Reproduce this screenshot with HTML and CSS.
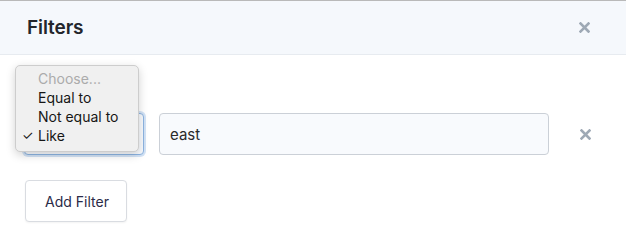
FILE: index.html
```html
<!DOCTYPE html>
<html>
<head>
<meta charset="utf-8">
<link rel="stylesheet" href="styles.css">
</head>
<body>
<div class="modal">
  <div class="header">
    <h2 class="title">Filters</h2>
    <button class="close" aria-label="Close">
      <svg width="11" height="11" viewBox="0 0 11 11"><path d="M1.5 1.5 L9.5 9.5 M9.5 1.5 L1.5 9.5" stroke="#9ea9b5" stroke-width="2.6" stroke-linecap="square"/></svg>
    </button>
  </div>
  <div class="content">
    <div class="filter-row">
      <div class="select">
        <div class="menu">
          <div class="opt placeholder">Choose...</div>
          <div class="opt">Equal to</div>
          <div class="opt">Not equal to</div>
          <div class="opt selected"><span class="check">✓</span>Like</div>
        </div>
      </div>
      <div class="input">east</div>
      <button class="close row-close" aria-label="Remove">
        <svg width="11" height="11" viewBox="0 0 11 11"><path d="M1.5 1.5 L9.5 9.5 M9.5 1.5 L1.5 9.5" stroke="#9ea9b5" stroke-width="2.6" stroke-linecap="square"/></svg>
      </button>
    </div>
    <button class="add-btn">Add Filter</button>
  </div>
</div>
</body>
</html>
```
FILE: styles.css
```css
* { box-sizing: border-box; }
html, body { margin: 0; padding: 0; background: #fff; }
body { font-family: Inter, "Noto Sans", sans-serif; color: #222; width: 626px; height: 250px; overflow: hidden; }
.modal { border-top: 1px solid #b9b9b9; }
.header {
  height: 54px;
  background: #f5f8fc;
  border-bottom: 1px solid #e7ebf0;
  display: flex;
  align-items: center;
  justify-content: space-between;
  padding: 0 36px 0 27px;
}
.title { margin: 0; font-size: 19px; font-weight: 600; color: #23262c; letter-spacing: -0.1px; }
.close { border: 0; background: none; padding: 0; width: 11px; height: 11px; display: flex; cursor: pointer; }
.content { padding: 58px 0 0 24px; }
.filter-row { display: flex; align-items: center; }
.select {
  position: relative;
  width: 120px;
  height: 42px;
  border: 1px solid #8db4e2;
  border-radius: 4px;
  box-shadow: 0 0 0 2px rgba(130,175,230,0.35);
  background: #f8fafd;
  margin-top: -1px;
}
.menu {
  position: absolute;
  left: -10px;
  top: -49px;
  width: 124px;
  background: #f0f0f0;
  border: 1px solid #cdcdcd;
  border-radius: 5px;
  box-shadow: 0 3px 10px rgba(0,0,0,0.18);
  padding: 3px 0 6px;
  font-size: 14px;
  line-height: 19px;
  color: #161616;
}
.opt { padding-left: 22px; position: relative; }
.placeholder { color: #ababab; }
.check { position: absolute; left: 6px; top: 0; font-size: 13px; }
.input {
  margin-left: 15px;
  width: 390px;
  height: 42px;
  border: 1px solid #cbd0d7;
  border-radius: 4px;
  background: #f8fafd;
  padding-left: 10px;
  display: flex;
  align-items: center;
  font-size: 15px;
  color: #2a2a2a;
}
.row-close { margin-left: 31px; }
.add-btn {
  margin: 25px 0 0 1px;
  width: 102px;
  height: 42px;
  border: 1px solid #d9dce1;
  border-radius: 4px;
  background: #fff;
  font-family: Inter, "Noto Sans", sans-serif;
  font-size: 14px;
  color: #2b2b48;
  padding: 0 0 0 2px;
  box-shadow: 0 1px 2px rgba(0,0,0,0.05);
}
```
